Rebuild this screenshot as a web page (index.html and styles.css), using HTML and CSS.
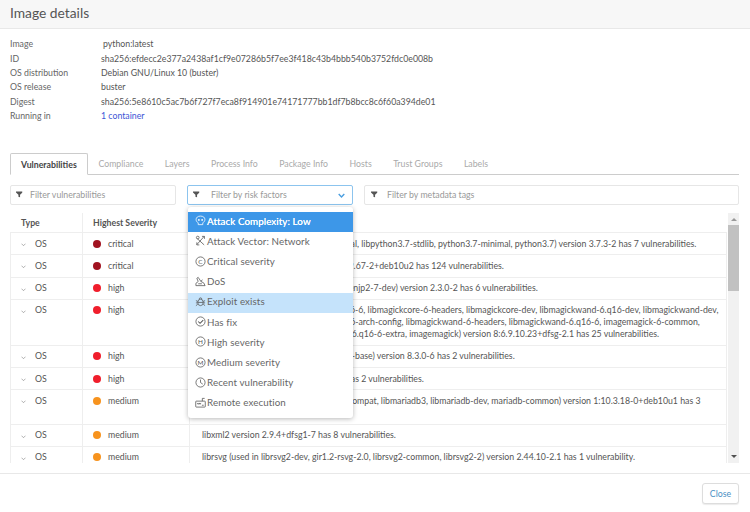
FILE: index.html
```html
<!DOCTYPE html>
<html lang="en">
<head>
<meta charset="utf-8">
<title>Image details</title>
<link rel="stylesheet" href="styles.css">
</head>
<body>
<svg class="defs" width="0" height="0" aria-hidden="true">
  <symbol id="funnel" viewBox="0 0 8 8"><path d="M0 .5h8v1.2L5 4.6V8L3 7V4.6L0 1.700z"/></symbol>
  <symbol id="chev" viewBox="0 0 6 4"><path d="M.6.8 3 3.2 5.400.8" fill="none" stroke="currentColor"/></symbol>
</svg>
<div class="app">
  <header class="head">Image details</header>
  <dl class="details">
    <div class="drow"><dt>Image</dt><dd class="shift">python:latest</dd></div>
    <div class="drow"><dt>ID</dt><dd>sha256:efdecc2e377a2438af1cf9e07286b5f7ee3f418c43b4bbb540b3752fdc0e008b</dd></div>
    <div class="drow"><dt>OS distribution</dt><dd>Debian GNU/Linux 10 (buster)</dd></div>
    <div class="drow"><dt>OS release</dt><dd>buster</dd></div>
    <div class="drow"><dt>Digest</dt><dd>sha256:5e8610c5ac7b6f727f7eca8f914901e74171777bb1df7b8bcc8c6f60a394de01</dd></div>
    <div class="drow"><dt>Running in</dt><dd><a class="link" href="#">1 container</a></dd></div>
  </dl>
  <nav class="tabs">
    <span class="tab active">Vulnerabilities</span>
    <span class="tab">Compliance</span>
    <span class="tab">Layers</span>
    <span class="tab">Process Info</span>
    <span class="tab">Package Info</span>
    <span class="tab">Hosts</span>
    <span class="tab">Trust Groups</span>
    <span class="tab">Labels</span>
  </nav>
  <div class="filters">
    <div class="filter f-one"><svg class="fun"><use href="#funnel"/></svg><span>Filter vulnerabilities</span></div>
    <div class="filter f-two">
      <svg class="fun"><use href="#funnel"/></svg><span>Filter by risk factors</span>
      <svg class="fchev"><use href="#chev"/></svg>
      <ul class="menu">
        <li class="item sel"><svg class="ic" viewBox="0 0 12 12"><path d="M6 1.200c3 0 4.800 1.500 4.800 3.800 0 1.700-1.200 3-2.300 3.500V10.500h-5V8.500C2.400 8 1.200 6.700 1.200 5 1.200 2.700 3 1.200 6 1.200z"/><circle cx="4.200" cy="5.400" r="1" class="solid"/><circle cx="7.800" cy="5.400" r="1" class="solid"/></svg>Attack Complexity: Low</li>
        <li class="item"><svg class="ic" viewBox="0 0 12 12"><path d="M2.500 4 10 10.800M10 1.500 2 10.500M7.600 1.500H10.300V4.200M2 8V10.800H4.700"/><circle cx="3" cy="2.800" r="1.500"/></svg>Attack Vector: Network</li>
        <li class="item"><svg class="ic" viewBox="0 0 12 12"><circle cx="6" cy="6" r="5"/><text x="6" y="8.600" class="ltr">C</text></svg>Critical severity</li>
        <li class="item"><svg class="ic" viewBox="0 0 12 12"><path d="M1 10.500h10L9.500 7.500 6.500 6 3.500 1.500 2 2.500 3.500 6 1 8z"/><path d="M3.500 8.500h4M6.500 6 8 4"/></svg>DoS</li>
        <li class="item hov"><svg class="ic" viewBox="0 0 12 12"><ellipse cx="6" cy="7" rx="3" ry="3.500"/><path d="M4.500 3.500c0-2 3-2 3 0M3 7h6M1 5l2 1M11 5 9 6M1 10.500l2-1.500M11 10.500 9 9M1 7.500h2M9 7.500h2"/></svg>Exploit exists</li>
        <li class="item"><svg class="ic" viewBox="0 0 12 12"><circle cx="6" cy="6" r="5"/><path d="m3.500 6 2 2 3.500-3.500" class="thick"/></svg>Has fix</li>
        <li class="item"><svg class="ic" viewBox="0 0 12 12"><circle cx="6" cy="6" r="5"/><text x="6" y="8.600" class="ltr">H</text></svg>High severity</li>
        <li class="item"><svg class="ic" viewBox="0 0 12 12"><circle cx="6" cy="6" r="5"/><text x="6" y="8.600" class="ltr">M</text></svg>Medium severity</li>
        <li class="item"><svg class="ic" viewBox="0 0 12 12"><circle cx="6" cy="6" r="5"/><path d="M6 2.800V6l2.500 1.800"/></svg>Recent vulnerability</li>
        <li class="item"><svg class="ic" viewBox="0 0 12 12"><rect x=".8" y="4.500" width="10.400" height="6.500" rx=".6"/><path d="M8 4.500V1.500h2.500M2.500 6.500l1 1.500 1-1.500 1 1.500 1-1.500M7.500 9h2"/></svg>Remote execution</li>
      </ul>
    </div>
    <div class="filter f-three"><svg class="fun"><use href="#funnel"/></svg><span>Filter by metadata tags</span></div>
  </div>
  <div class="tablewrap">
    <div class="tableclip">
      <table class="vulns">
        <colgroup><col class="c1"><col class="c2"><col class="c3"></colgroup>
        <thead><tr><th>Type</th><th>Highest Severity</th><th>Description</th></tr></thead>
        <tbody>
          <tr><td><svg class="chev"><use href="#chev"/></svg>OS</td><td><i class="dot crit"></i>critical</td><td>python3.7 (used in libpython3.7-minimal, libpython3.7-stdlib, python3.7-minimal, python3.7) version 3.7.3-2 has 7 vulnerabilities.</td></tr>
          <tr><td><svg class="chev"><use href="#chev"/></svg>OS</td><td><i class="dot crit"></i>critical</td><td>linux (used in linux-lib-dev) version 4.19.67-2+deb10u2 has 124 vulnerabilities.</td></tr>
          <tr><td><svg class="chev"><use href="#chev"/></svg>OS</td><td><i class="dot high"></i>high</td><td>openjpeg2 (used in libopenjp2-7, libopenjp2-7-dev) version 2.3.0-2 has 6 vulnerabilities.</td></tr>
          <tr><td><svg class="chev"><use href="#chev"/></svg>OS</td><td><i class="dot high"></i>high</td><td>imagemagick (used in libmagickcore.q16-6, libmagickcore-6-headers, libmagickcore-dev, libmagickwand-6.q16-dev, libmagickwand-dev,<br>libmagick++-6.q16-dev, libmagickcore-6-arch-config, libmagickwand-6-headers, libmagickwand-6.q16-6, imagemagick-6-common,<br>imagemagick-6.q16hdri, libmagickcore-6.q16-6-extra, imagemagick) version 8:6.9.10.23+dfsg-2.1 has 25 vulnerabilities.</td></tr>
          <tr><td><svg class="chev"><use href="#chev"/></svg>OS</td><td><i class="dot high"></i>high</td><td>gcc-8 (used in libstdc++-8-dev, libgcc-8-base) version 8.3.0-6 has 2 vulnerabilities.</td></tr>
          <tr><td><svg class="chev"><use href="#chev"/></svg>OS</td><td><i class="dot high"></i>high</td><td>libgcrypt20-dev version 1.8.4-5+dfsg has 2 vulnerabilities.</td></tr>
          <tr><td><svg class="chev"><use href="#chev"/></svg>OS</td><td><i class="dot med"></i>medium</td><td>mariadb-10.3 (used in libmariadb-dev-compat, libmariadb3, libmariadb-dev, mariadb-common) version 1:10.3.18-0+deb10u1 has 3 vulnerabilities.</td></tr>
          <tr><td><svg class="chev"><use href="#chev"/></svg>OS</td><td><i class="dot med"></i>medium</td><td>libxml2 version 2.9.4+dfsg1-7 has 8 vulnerabilities.</td></tr>
          <tr><td><svg class="chev"><use href="#chev"/></svg>OS</td><td><i class="dot med"></i>medium</td><td>librsvg (used in librsvg2-dev, gir1.2-rsvg-2.0, librsvg2-common, librsvg2-2) version 2.44.10-2.1 has 1 vulnerability.</td></tr>
        </tbody>
      </table>
    </div>
    <div class="scrollbar">
      <span class="arrow up"></span>
      <span class="thumb"></span>
      <span class="arrow down"></span>
    </div>
  </div>
  <footer class="foot"><button class="close" type="button">Close</button></footer>
</div>
</body>
</html>
```

FILE: styles.css
```css
* { box-sizing: border-box; }
html, body { margin: 0; padding: 0; background: #fff; }
body { font-family: Lato, "Liberation Sans", sans-serif; font-size: 8.750px; color: #555; overflow: hidden; }
.defs { position: absolute; }
.app { width: 750px; height: 512px; display: flex; flex-direction: column; overflow: hidden; }

.head { height: 29px; padding: 0 10px; background: #f7f7f7; border-bottom: 1px solid #e8e8e8; font-size: 13.800px; line-height: 26px; color: #555; }

.details { margin: 8.300px 0 0; padding: 0 10px; }
.drow { display: flex; height: 14.4px; line-height: 14.4px; }
.drow dt { width: 91px; color: #666; }
.drow dd { margin: 0; color: #555; }
.drow dd.shift { padding-left: 2px; }
.link { color: #3d55d6; text-decoration: none; }

.tabs { display: flex; margin: 29.5px 11px 0 10px; height: 22px; border-bottom: 1px solid #ccc; }
.tab { padding: 0 10.730px; line-height: 21px; color: #aaa; }
.tab.active { height: 22px; border: 1px solid #ccc; border-bottom: 1px solid #fff; border-radius: 2px 2px 0 0; color: #444; font-weight: 700; padding: 0 10px; }

.filters { display: flex; gap: 11px; margin: 10px 11px 0 10px; height: 20px; }
.filter { position: relative; display: flex; align-items: center; height: 20px; padding-bottom: 1px; border: 1px solid #e6e6e6; border-radius: 2px; color: #999; }
.f-one { width: 166px; padding-left: 5px; }
.f-two { width: 166px; padding-left: 5px; border-color: #8cc4ee; }
.f-three { flex: 1; padding-left: 6px; }
.fun { width: 6.500px; height: 6.500px; fill: #555; flex: none; }
.f-one .fun { margin-right: 7.500px; }
.f-two .fun { margin-right: 11.500px; }
.f-three .fun { margin-right: 9.500px; }
.fchev { position: absolute; right: 7.500px; top: 7px; width: 7px; height: 5px; color: #4a9ee0; stroke-width: 1.200; }

.menu { position: absolute; z-index: 5; left: 0; top: 21px; width: 165px; margin: 0; padding: 5px 0 4px; list-style: none; background: #fff; border-radius: 3px; box-shadow: 0 1px 5px rgba(0,0,0,.28); }
.item { display: flex; align-items: center; height: 20.2px; padding: 0 0 3px 7px; font-size: 9.750px; color: #666; letter-spacing: .1px; }
.item.sel { background: #3d97e8; color: #fff; text-shadow: 0 0 .4px #fff; }
.item.hov { background: #c5e3fb; }
.ic { width: 11px; height: 11px; margin-right: 1px; flex: none; fill: none; stroke: #555; stroke-width: .85; }
.sel .ic { stroke: #fff; }
.ic .thick { stroke-width: 1.100; }
.ic .solid { fill: #fff; stroke: none; }
.ic .ltr { font-family: Lato, sans-serif; font-size: 7px; text-anchor: middle; fill: #555; stroke: none; }

.tablewrap { display: flex; margin: 8px 11px 0 10px; height: 250px; }
.tableclip { flex: 1; overflow: hidden; }
.vulns { width: 717px; table-layout: fixed; border-collapse: collapse; line-height: 11.900px; }
.c1 { width: 72px; }
.c2 { width: 107px; }
.vulns th { height: 19.500px; padding: 0 0 0 10px; text-align: left; font-weight: 700; color: #555; border-bottom: 1px solid #eee; }
.vulns th:first-child { border-left: 1px solid #fff; }
.vulns th + th { border-left: 1px solid #eee; }
.vulns td { padding: 4.400px 0 4.950px 10px; vertical-align: top; border-bottom: 1px solid #eee; border-left: 1px solid #eee; color: #555; }
.vulns td:last-child { padding-left: 12px; border-right: 1px solid #eee; }
.chev { width: 5px; height: 3.400px; margin-right: 9px; color: #888; stroke-width: .8; }
.dot { display: inline-block; width: 8px; height: 8px; margin-right: 7px; border-radius: 50%; vertical-align: -1px; }
.crit { background: #a11320; }
.high { background: #f01e2c; }
.med { background: #f7931e; }

.scrollbar { width: 11px; margin-left: 1px; background: #f1f1f1; display: flex; flex-direction: column; align-items: center; }
.thumb { width: 100%; height: 66px; background: #c1c1c1; }
.arrow { width: 0; height: 0; border-left: 3px solid transparent; border-right: 3px solid transparent; }
.arrow.up { border-bottom: 3px solid #999; margin: 5px 0 4px; }
.arrow.down { border-top: 3px solid #505050; margin-top: auto; margin-bottom: 5px; }

.foot { display: flex; justify-content: flex-end; margin-top: 10px; padding: 9px 11px 0 0; border-top: 1px solid #e8e8e8; }
.close { width: 37px; height: 21px; padding: 0; font: 8.750px Lato, sans-serif; color: #4a90c4; background: #fff; border: 1px solid #ddd; border-radius: 3px; box-shadow: 0 1px 1px rgba(0,0,0,.08); }
```
